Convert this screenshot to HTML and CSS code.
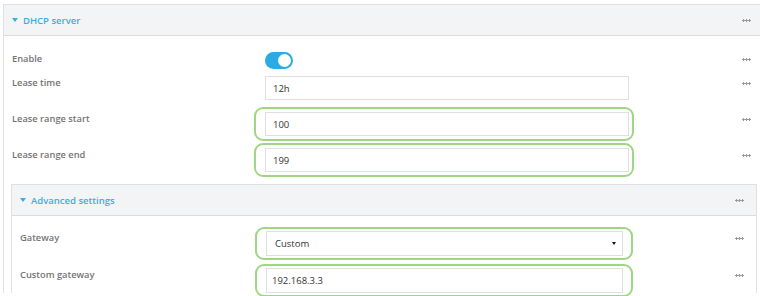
FILE: index.html
```html
<!DOCTYPE html>
<html lang="en">
<head>
    <meta charset="UTF-8">
    <meta name="viewport" content="width=device-width, initial-scale=1.0">
    <title>DHCP server</title>
    <link rel="stylesheet" href="styles.css">
</head>
<body>

    <div class="panel">
        <!-- DHCP server header -->
        <div class="panel-head">
            <span class="caret"></span>
            <span class="panel-title">DHCP server</span>
            <span class="more"></span>
        </div>

        <div class="panel-body">
            <div class="row row-switch">
                <label class="label">Enable</label>
                <div class="control">
                    <span class="switch"><span class="knob"></span></span>
                </div>
                <span class="more"></span>
            </div>

            <div class="row">
                <label class="label" for="leaseTime">Lease time</label>
                <div class="control">
                    <input type="text" id="leaseTime" class="field" value="12h">
                </div>
                <span class="more"></span>
            </div>

            <div class="row">
                <label class="label" for="rangeStart">Lease range start</label>
                <div class="control marked">
                    <input type="text" id="rangeStart" class="field" value="100">
                </div>
                <span class="more"></span>
            </div>

            <div class="row">
                <label class="label" for="rangeEnd">Lease range end</label>
                <div class="control marked">
                    <input type="text" id="rangeEnd" class="field" value="199">
                </div>
                <span class="more"></span>
            </div>

            <!-- Advanced settings -->
            <div class="panel sub">
                <div class="panel-head">
                    <span class="caret"></span>
                    <span class="panel-title">Advanced settings</span>
                    <span class="more"></span>
                </div>

                <div class="panel-body">
                    <div class="row">
                        <label class="label" for="gateway">Gateway</label>
                        <div class="control marked">
                            <div class="field select" id="gateway">
                                <span>Custom</span>
                                <span class="arrow"></span>
                            </div>
                        </div>
                        <span class="more"></span>
                    </div>

                    <div class="row">
                        <label class="label" for="customGateway">Custom gateway</label>
                        <div class="control marked">
                            <input type="text" id="customGateway" class="field" value="192.168.3.3">
                        </div>
                        <span class="more"></span>
                    </div>
                </div>
            </div>
        </div>
    </div>

</body>
</html>
```

FILE: styles.css
```css
html, body {
    margin: 0;
    padding: 0;
    overflow: hidden;
    background-color: #fff;
}

body {
    font-family: "Open Sans", "Noto Sans", sans-serif;
    font-size: 9.5px;
    color: #333;
}

.panel {
    box-sizing: border-box;
    width: 761px;
    margin: 4px 0 0 3px;
    border: 1px solid #e0e0e0;
    border-bottom: none;
}

.panel-head {
    display: flex;
    align-items: center;
    height: 30px;
    padding: 0 12px 0 8px;
    background-color: #f3f4f6;
    border-bottom: 1px solid #dcdcdc;
}

.caret {
    width: 0;
    height: 0;
    border-left: 3px solid transparent;
    border-right: 3px solid transparent;
    border-top: 4px solid #3aaee2;
    margin-right: 5px;
}

.panel-title {
    flex: 1;
    color: #3aaee2;
    font-weight: 600;
}

.more {
    width: 9px;
    height: 3px;
    background-image: radial-gradient(circle, #9a9a9a 1.1px, transparent 1.4px);
    background-size: 3px 3px;
}

.panel-body {
    padding: 16px 12px 0 8px;
}

.row {
    display: grid;
    grid-template-columns: 253px 364px 1fr;
    align-items: start;
    margin-bottom: 12px;
}

.row .more {
    justify-self: end;
    margin-top: 6px;
}

.row-switch {
    margin-bottom: 7px;
}

.label {
    line-height: 14px;
    color: #747474;
    font-weight: 600;
    font-size: 9.3px;
}

.control {
    position: relative;
}

/* green annotation ring */
.control.marked::before {
    content: "";
    position: absolute;
    top: -5px;
    bottom: -5px;
    left: -11px;
    right: -5px;
    border: 2px solid #9fd683;
    border-radius: 9px;
}

.switch {
    display: block;
    position: relative;
    width: 28px;
    height: 17px;
    border-radius: 9px;
    background-color: #2aabe4;
}

.knob {
    position: absolute;
    top: 2px;
    right: 2px;
    width: 13px;
    height: 13px;
    border-radius: 50%;
    background-color: #fff;
}

.field {
    box-sizing: border-box;
    display: block;
    width: 100%;
    height: 24px;
    margin: 0;
    padding: 0 7px;
    border: 1px solid #e0e0e0;
    font-family: inherit;
    font-size: 9.5px;
    color: #333;
    background-color: #fff;
    outline: none;
}

/* advanced settings */
.sub {
    width: 746px;
    margin: 0 0 0 -1px;
}

.sub .panel-body {
    padding-top: 15px;
}

.sub .row {
    grid-template-columns: 246px 357px 1fr;
}

.sub .field {
    height: 25px;
    padding: 0 5px;
}

.sub .control.marked::before {
    top: -4px;
    bottom: -4px;
    left: -11px;
    right: -10px;
}

.select {
    display: flex;
    align-items: center;
    justify-content: space-between;
}

.sub .select {
    padding: 0 6px 0 8px;
}

.arrow {
    width: 0;
    height: 0;
    border-left: 2.5px solid transparent;
    border-right: 2.5px solid transparent;
    border-top: 3.5px solid #111;
}
```
